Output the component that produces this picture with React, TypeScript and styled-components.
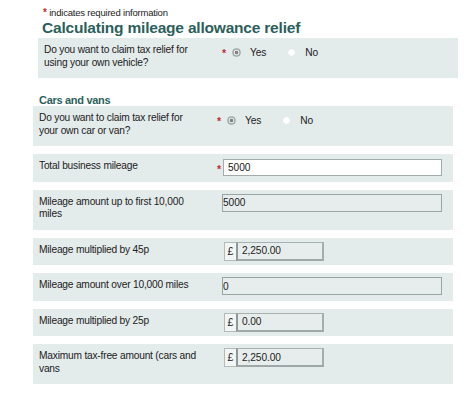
import styled, { createGlobalStyle } from 'styled-components';

const GlobalStyle = createGlobalStyle`
  body {
    margin: 0;
    background: #ffffff;
    font-family: "Liberation Sans", Arial, sans-serif;
    color: #222222;
  }
`;

const Page = styled.div`
  width: 474px;
  padding: 7px 0 0 33px;
  box-sizing: border-box;
`;

const TopBlock = styled.div`
  padding-left: 5px;
`;

const Note = styled.p`
  margin: 0 0 0 5px;
  font-size: 9.5px;
  line-height: 12px;
  letter-spacing: -0.2px;
`;

const Star = styled.span`
  color: #b8322a;
  font-weight: bold;
  font-size: 10px;
`;

const Heading = styled.h1`
  margin: 0 0 2px 4px;
  font-size: 15.5px;
  line-height: 17px;
  font-weight: bold;
  letter-spacing: -0.2px;
  color: #2c5f5c;
`;

const SubHeading = styled.h2`
  margin: 16px 0 0 6px;
  font-size: 11px;
  line-height: 12px;
  font-weight: bold;
  letter-spacing: -0.3px;
  color: #2c5f5c;
`;

const Rows = styled.div`
  display: flex;
  flex-direction: column;
  gap: 8px;
`;

const Panel = styled.div`
  width: 420px;
  box-sizing: border-box;
  display: grid;
  grid-template-columns: 178px 6px 1fr;
  align-items: start;
  padding: 4px 11px 4px 6px;
  background: #e4ebeb;
`;

const Label = styled.div`
  max-width: 160px;
  padding: 2px 0 5px;
  font-size: 10.2px;
  line-height: 12.5px;
  letter-spacing: -0.2px;
`;

const Req = styled.span`
  padding-top: 6px;
  color: #b8322a;
  font-size: 10.5px;
  font-weight: bold;
  line-height: 10px;
`;

const Control = styled.div`
  display: flex;
  align-items: center;
  min-height: 18px;
`;

const RadioGroup = styled.div`
  display: flex;
  align-items: center;
  padding: 3px 0 0 4px;
  font-size: 10.2px;
  letter-spacing: -0.1px;
`;

const Radio = styled.span<{ $checked?: boolean }>`
  display: inline-block;
  width: 9px;
  height: 9px;
  border-radius: 50%;
  box-sizing: border-box;
  margin-right: 9px;
  background: ${(p) =>
    p.$checked
      ? 'radial-gradient(circle, #7e8383 0 1.6px, #e9ecec 2.1px 2.6px, #a9aeae 3.1px)'
      : '#ffffff'};
  border: 1px solid ${(p) => (p.$checked ? '#a4a9a9' : '#e2e7e7')};
`;

const Choice = styled.span<{ $gap?: number }>`
  margin-right: ${(p) => p.$gap ?? 0}px;
`;

const TextInput = styled.div<{ $readOnly?: boolean }>`
  flex: 1;
  height: ${(p) => (p.$readOnly ? 18 : 17)}px;
  box-sizing: border-box;
  display: flex;
  align-items: center;
  padding-left: ${(p) => (p.$readOnly ? 0 : 4)}px;
  margin-left: ${(p) => (p.$readOnly ? -1 : 0)}px;
  background: ${(p) => (p.$readOnly ? '#e7eded' : '#ffffff')};
  border: 1px solid ${(p) => (p.$readOnly ? '#9aa4a3' : '#a3abab')};
  font-size: 10.2px;
  letter-spacing: -0.1px;
`;

const Money = styled.div`
  display: flex;
  height: 19px;
  margin-left: 1px;
`;

const Pound = styled.span`
  width: 12px;
  box-sizing: border-box;
  display: flex;
  justify-content: center;
  padding-top: 2px;
  background: #f3f5f5;
  border: 1px solid #b3baba;
  border-right: none;
  font-size: 10.5px;
`;

const MoneyValue = styled.span`
  width: 88px;
  box-sizing: border-box;
  display: flex;
  align-items: center;
  padding-left: 4px;
  background: #e7eded;
  border: 1px solid #a9b1b0;
  border-left: 2px solid #8f9897;
  border-bottom: 2px solid #a0a8a7;
  border-right: 2px solid #a6aead;
  font-size: 10.2px;
  letter-spacing: -0.1px;
`;

function YesNo() {
  return (
    <RadioGroup>
      <Radio $checked />
      <Choice $gap={21}>Yes</Choice>
      <Radio />
      <Choice>No</Choice>
    </RadioGroup>
  );
}

function MoneyField({ value }: { value: string }) {
  return (
    <Money>
      <Pound>£</Pound>
      <MoneyValue>{value}</MoneyValue>
    </Money>
  );
}

export default function App() {
  return (
    <>
      <GlobalStyle />
      <Page>
        <TopBlock>
          <Note>
            <Star>*</Star> indicates required information
          </Note>
          <Heading>Calculating mileage allowance relief</Heading>
          <Panel>
            <Label>Do you want to claim tax relief for using your own vehicle?</Label>
            <Req>*</Req>
            <Control>
              <YesNo />
            </Control>
          </Panel>
        </TopBlock>

        <SubHeading>Cars and vans</SubHeading>
        <Rows>
          <Panel>
            <Label>Do you want to claim tax relief for your own car or van?</Label>
            <Req>*</Req>
            <Control>
              <YesNo />
            </Control>
          </Panel>
          <Panel>
            <Label>Total business mileage</Label>
            <Req>*</Req>
            <Control>
              <TextInput>5000</TextInput>
            </Control>
          </Panel>
          <Panel>
            <Label>Mileage amount up to first 10,000 miles</Label>
            <span />
            <Control>
              <TextInput $readOnly>5000</TextInput>
            </Control>
          </Panel>
          <Panel>
            <Label>Mileage multiplied by 45p</Label>
            <span />
            <Control>
              <MoneyField value="2,250.00" />
            </Control>
          </Panel>
          <Panel>
            <Label>Mileage amount over 10,000 miles</Label>
            <span />
            <Control>
              <TextInput $readOnly>0</TextInput>
            </Control>
          </Panel>
          <Panel>
            <Label>Mileage multiplied by 25p</Label>
            <span />
            <Control>
              <MoneyField value="0.00" />
            </Control>
          </Panel>
          <Panel>
            <Label>Maximum tax-free amount (cars and vans</Label>
            <span />
            <Control>
              <MoneyField value="2,250.00" />
            </Control>
          </Panel>
        </Rows>
      </Page>
    </>
  );
}
